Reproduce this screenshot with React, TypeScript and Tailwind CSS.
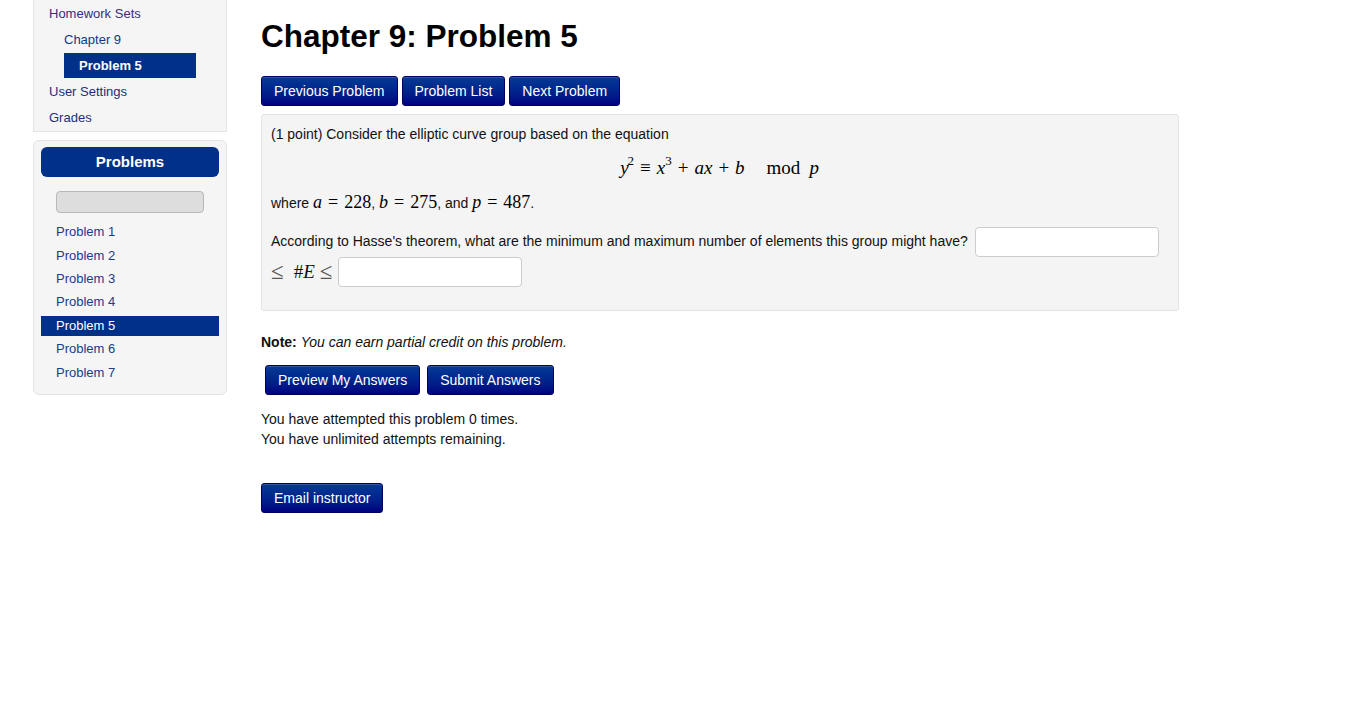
const btn =
  "inline-flex items-center h-[30px] px-[12px] rounded-[3px] border border-[#00005e] bg-gradient-to-b from-[#0a3a96] to-[#000080] text-white text-[14px] leading-none shadow-[inset_0_1px_0_rgba(255,255,255,0.15)]";

const mathI = "font-['Liberation_Serif',serif] italic";
const mathR = "font-['Liberation_Serif',serif]";

function Sidebar() {
  const problems = [1, 2, 3, 4, 5, 6, 7];
  return (
    <div className="ml-[33px] w-[194px] shrink-0 flex flex-col">
      <div className="bg-[#f5f5f5] border border-t-0 border-[#e3e3e3] text-[13px] h-[132px] pt-[1px]">
        <div className="h-[26px] flex items-center pl-[15px] text-[#3b2b80]">Homework Sets</div>
        <div className="h-[26px] flex items-center pl-[30px] text-[#0b3a8a]">Chapter 9</div>
        <div className="h-[26px] flex items-start">
          <div className="ml-[30px] w-[132px] h-[25px] bg-[#003087] text-white font-bold flex items-center pl-[15px]">
            Problem 5
          </div>
        </div>
        <div className="h-[26px] flex items-center pl-[15px] text-[#1c2f7a]">User Settings</div>
        <div className="h-[26px] flex items-center pl-[15px] text-[#1c2f7a]">Grades</div>
      </div>

      <div className="mt-[8px] bg-[#f5f5f5] border border-[#e3e3e3] rounded-[6px] px-[7px] pt-[6px] pb-[12px]">
        <div className="h-[30px] rounded-[6px] bg-[#003087] text-white font-bold text-[15px] flex items-center justify-center">
          Problems
        </div>
        <div className="mt-[14px] mx-[15px] h-[22px] rounded-[4px] bg-[#dddddd] border border-[#b9b9b9]" />
        <div className="mt-[9px] flex flex-col gap-[3.4px] text-[13px]">
          {problems.map((n) =>
            n === 5 ? (
              <div key={n} className="h-[20px] bg-[#003087] text-white flex items-center pl-[15px]">
                Problem {n}
              </div>
            ) : (
              <div key={n} className="h-[20px] text-[#1b3b8c] flex items-center pl-[15px]">
                Problem {n}
              </div>
            )
          )}
        </div>
      </div>
    </div>
  );
}

function Input() {
  return <div className="w-[184px] h-[30px] bg-white border border-[#cccccc] rounded-[4px] shrink-0" />;
}

export default function App() {
  return (
    <div className="min-h-[728px] bg-white flex font-['Liberation_Sans',Arial,sans-serif] text-[#222]">
      <Sidebar />
      <div className="ml-[34px] w-[918px] flex flex-col">
        <h1 className="mt-[18px] text-[31.5px] leading-[1.2] font-bold text-black">Chapter 9: Problem 5</h1>

        <div className="mt-[20px] flex gap-[4px]">
          <div className={btn}>Previous Problem</div>
          <div className={btn}>Problem List</div>
          <div className={btn}>Next Problem</div>
        </div>

        <div className="mt-[8px] bg-[#f4f4f4] border border-[#e3e3e3] rounded-[3px] pl-[9px] pr-[10px] pt-[9px] pb-[23px] text-[14px] text-[#111]">
          <div className="leading-[20px]">(1 point) Consider the elliptic curve group based on the equation</div>
          <div className="mt-[12px] h-[24px] flex items-center justify-center text-[19px] text-black">
            <span className={mathI}>y</span>
            <sup className={`${mathR} text-[13px] -ml-[1px]`}>2</sup>
            <span className={`${mathR} mx-[6px]`}>≡</span>
            <span className={mathI}>x</span>
            <sup className={`${mathR} text-[13px]`}>3</sup>
            <span className={`${mathR} mx-[6px]`}>+</span>
            <span className={mathI}>ax</span>
            <span className={`${mathR} mx-[6px]`}>+</span>
            <span className={mathI}>b</span>
            <span className={`${mathR} ml-[22px]`}>mod</span>
            <span className={`${mathI} ml-[9px]`}>p</span>
          </div>
          <div className="mt-[12px] leading-[20px] flex items-baseline">
            <span>where&nbsp;</span>
            <span className={`${mathI} text-[18px] text-black`}>a</span>
            <span className={`${mathR} text-[18px] text-black mx-[6px]`}>=</span>
            <span className={`${mathR} text-[18px] text-black`}>228</span>
            <span>,&nbsp;</span>
            <span className={`${mathI} text-[18px] text-black`}>b</span>
            <span className={`${mathR} text-[18px] text-black mx-[6px]`}>=</span>
            <span className={`${mathR} text-[18px] text-black`}>275</span>
            <span>, and&nbsp;</span>
            <span className={`${mathI} text-[18px] text-black`}>p</span>
            <span className={`${mathR} text-[18px] text-black mx-[6px]`}>=</span>
            <span className={`${mathR} text-[18px] text-black`}>487</span>
            <span>.</span>
          </div>
          <div className="mt-[14px] flex items-center">
            <span>According to Hasse's theorem, what are the minimum and maximum number of elements this group might have?</span>
            <span className="ml-[7px]">
              <Input />
            </span>
          </div>
          <div className="flex items-center h-[30px]">
            <span className={`${mathR} text-[23px] leading-none text-[#555]`}>≤</span>
            <span className={`${mathR} text-[19px] ml-[10px]`}>#</span>
            <span className={`${mathI} text-[19px]`}>E</span>
            <span className={`${mathR} text-[23px] leading-none text-[#555] ml-[5px]`}>≤</span>
            <span className="ml-[6px]">
              <Input />
            </span>
          </div>
        </div>

        <div className="mt-[21px] text-[14px] leading-[20px] text-[#111]">
          <b>Note:</b> <i>You can earn partial credit on this problem.</i>
        </div>

        <div className="mt-[13px] ml-[4px] flex gap-[7px]">
          <div className={btn}>Preview My Answers</div>
          <div className={btn}>Submit Answers</div>
        </div>

        <div className="mt-[14px] text-[14px] leading-[20px] text-[#111]">
          <div>You have attempted this problem 0 times.</div>
          <div>You have unlimited attempts remaining.</div>
        </div>

        <div className="mt-[34px] flex">
          <div className={btn}>Email instructor</div>
        </div>
      </div>
    </div>
  );
}
